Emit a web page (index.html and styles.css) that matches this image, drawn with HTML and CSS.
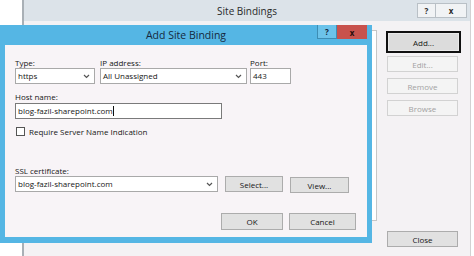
FILE: index.html
```html
<!DOCTYPE html>
<html lang="en">
<head>
    <meta charset="UTF-8">
    <title>Add Site Binding</title>
    <link rel="stylesheet" href="styles.css">
</head>
<body>

    <!-- Site Bindings window (behind) -->
    <div class="win-main">
        <div class="main-title">
            <span>Site Bindings</span>
            <div class="main-ctrls">
                <span class="mctrl">?</span><span class="mctrl">x</span>
            </div>
        </div>
        <div class="main-body">
            <div class="list"></div>
            <div class="side">
                <div class="default-ring"><button class="btn">Add...</button></div>
                <button class="btn side-btn first" disabled>Edit...</button>
                <button class="btn side-btn" disabled>Remove</button>
                <button class="btn side-btn" disabled>Browse</button>
                <button class="btn side-btn close-btn">Close</button>
            </div>
        </div>
    </div>

    <!-- Add Site Binding dialog -->
    <div class="dialog">
        <div class="dlg-title">
            <span>Add Site Binding</span>
            <div class="dlg-ctrls">
                <span class="dctrl help">?</span><span class="dctrl close">x</span>
            </div>
        </div>
        <div class="dlg-body">
            <div class="row top-row">
                <div class="field">
                    <label>Type:</label>
                    <div class="select type-sel">https<svg class="chev" width="7" height="5" viewBox="0 0 7 5"><path d="M1 1l2.5 2.5L6 1" fill="none" stroke="#555" stroke-width="1.2"/></svg></div>
                </div>
                <div class="field">
                    <label>IP address:</label>
                    <div class="select ip-sel">All Unassigned<svg class="chev" width="7" height="5" viewBox="0 0 7 5"><path d="M1 1l2.5 2.5L6 1" fill="none" stroke="#555" stroke-width="1.2"/></svg></div>
                </div>
                <div class="field">
                    <label>Port:</label>
                    <div class="input port">443</div>
                </div>
            </div>

            <div class="field host">
                <label>Host name:</label>
                <div class="input host-in">blog-fazil-sharepoint.com<span class="caret"></span></div>
            </div>

            <div class="check-row">
                <span class="check"></span>
                <span>Require Server Name Indication</span>
            </div>

            <div class="field ssl">
                <label>SSL certificate:</label>
                <div class="ssl-row">
                    <div class="select ssl-sel">blog-fazil-sharepoint.com<svg class="chev" width="7" height="5" viewBox="0 0 7 5"><path d="M1 1l2.5 2.5L6 1" fill="none" stroke="#555" stroke-width="1.2"/></svg></div>
                    <button class="btn select-btn">Select...</button>
                    <button class="btn view-btn">View...</button>
                </div>
            </div>

            <div class="dlg-actions">
                <button class="btn ok-btn">OK</button>
                <button class="btn cancel-btn">Cancel</button>
            </div>
        </div>
    </div>

</body>
</html>
```

FILE: styles.css
```css
body {
    margin: 0;
    width: 474px;
    height: 256px;
    overflow: hidden;
    background-color: #fff;
    font-family: "Open Sans", "Noto Sans", Arial, sans-serif;
    font-size: 8px;
    color: #161616;
    position: relative;
}
button {
    font-family: inherit;
    font-size: 8px;
    padding: 0;
}

/* Site Bindings window */
.win-main {
    position: absolute;
    left: 22px;
    top: 0;
    width: 449px;
    height: 256px;
    border-left: 2px solid #a9b0b6;
    border-right: 1px solid #d2d2d2;
    background-color: #f4f2f4;
    box-sizing: border-box;
}
.main-title {
    height: 21px;
    background-color: #dce3e9;
    display: flex;
    align-items: center;
    justify-content: center;
    position: relative;
    font-size: 10px;
    color: #2a2a2a;
}
.main-ctrls {
    position: absolute;
    right: 3px;
    top: 3px;
    display: flex;
}
.mctrl {
    width: 19px;
    height: 15px;
    border: 1px solid #b9c0c6;
    background-color: #f1f3f5;
    box-sizing: border-box;
    display: flex;
    align-items: center;
    justify-content: center;
    font-weight: bold;
    font-size: 8px;
}
.mctrl + .mctrl {
    width: 31px;
    border-left: none;
}
.main-body {
    display: flex;
    padding: 9px 8px 0 4px;
}
.list {
    width: 349px;
    height: 191px;
    background-color: #fff;
    border: 1px solid #c6c6c6;
    box-sizing: border-box;
}
.side {
    margin-left: 9px;
    width: 75px;
    display: flex;
    flex-direction: column;
    padding-top: 1px;
}
.btn {
    background-color: #e1e1e1;
    border: 1px solid #acacac;
    color: #161616;
    height: 16px;
    box-sizing: border-box;
}
.btn:disabled {
    background-color: #f4f4f4;
    border-color: #d2d2d2;
    color: #a2a2a2;
}
.default-ring {
    border: 2px solid #111;
    height: 22px;
    box-sizing: border-box;
    display: flex;
}
.default-ring .btn {
    width: 100%;
    height: 18px;
    border-color: #e9e9e9;
    background-color: #dcdcdc;
}
.side-btn {
    width: 71px;
    margin-left: 1px;
    margin-top: 6px;
}
.side-btn.first {
    margin-top: 3px;
}
.close-btn {
    margin-top: 115px;
}

/* Add Site Binding dialog */
.dialog {
    position: absolute;
    left: 0;
    top: 25px;
    width: 372px;
    height: 218px;
    background-color: #55b6e4;
    padding: 0 5px 6px 5px;
    box-sizing: border-box;
    display: flex;
    flex-direction: column;
}
.dlg-title {
    height: 20px;
    flex-shrink: 0;
    display: flex;
    align-items: center;
    justify-content: center;
    position: relative;
    font-size: 10.5px;
    color: #16293d;
}
.dlg-ctrls {
    position: absolute;
    right: 0;
    top: 0;
    display: flex;
}
.dctrl {
    height: 14px;
    display: flex;
    align-items: center;
    justify-content: center;
    font-weight: bold;
    font-size: 8px;
    color: #14243a;
    box-sizing: border-box;
}
.dctrl.help {
    width: 20px;
    background-color: #6cc3ea;
    border: 1px solid #3d8db4;
    border-top: none;
}
.dctrl.close {
    width: 30px;
    background-color: #c8524d;
    color: #2a0d0c;
}
.dlg-body {
    flex: 1;
    background-color: #f8f4f7;
    padding: 12px 11px 0 10px;
    display: flex;
    flex-direction: column;
}
label {
    display: block;
    height: 11px;
    line-height: 11px;
}
.row {
    display: flex;
}
.field + .field {
    margin-left: 5px;
}
.top-row .field:last-child {
    margin-left: 3px;
}
.select, .input {
    height: 16px;
    background-color: #fff;
    border: 1px solid #a9a9a9;
    box-sizing: border-box;
    display: flex;
    align-items: center;
    padding-left: 2px;
    line-height: 14px;
}
.chev {
    margin-left: auto;
    margin-right: 4px;
}
.type-sel {
    width: 80px;
}
.ip-sel {
    width: 147px;
}
.port {
    width: 41px;
}
.host {
    margin-top: 7px;
}
.host label {
    margin-bottom: 1px;
}
.host-in {
    width: 207px;
    border-color: #7a7a7a;
}
.caret {
    width: 1px;
    height: 10px;
    background-color: #111;
}
.check-row {
    display: flex;
    align-items: center;
    margin-top: 7px;
    height: 10px;
}
.check {
    width: 9px;
    height: 9px;
    border: 1px solid #555;
    background-color: #fff;
    box-sizing: border-box;
    margin: 0 4px 0 1px;
}
.ssl {
    margin-top: 29px;
}
.ssl-row {
    display: flex;
    align-items: flex-start;
}
.ssl-sel {
    width: 203px;
}
.select-btn {
    width: 58px;
    margin-left: 7px;
}
.view-btn {
    width: 59px;
    margin-left: 7px;
    margin-top: 1px;
}
.dlg-actions {
    display: flex;
    justify-content: flex-end;
    margin-top: 20px;
}
.ok-btn {
    width: 62px;
    height: 17px;
}
.cancel-btn {
    width: 67px;
    height: 17px;
    margin-left: 6px;
}
```
